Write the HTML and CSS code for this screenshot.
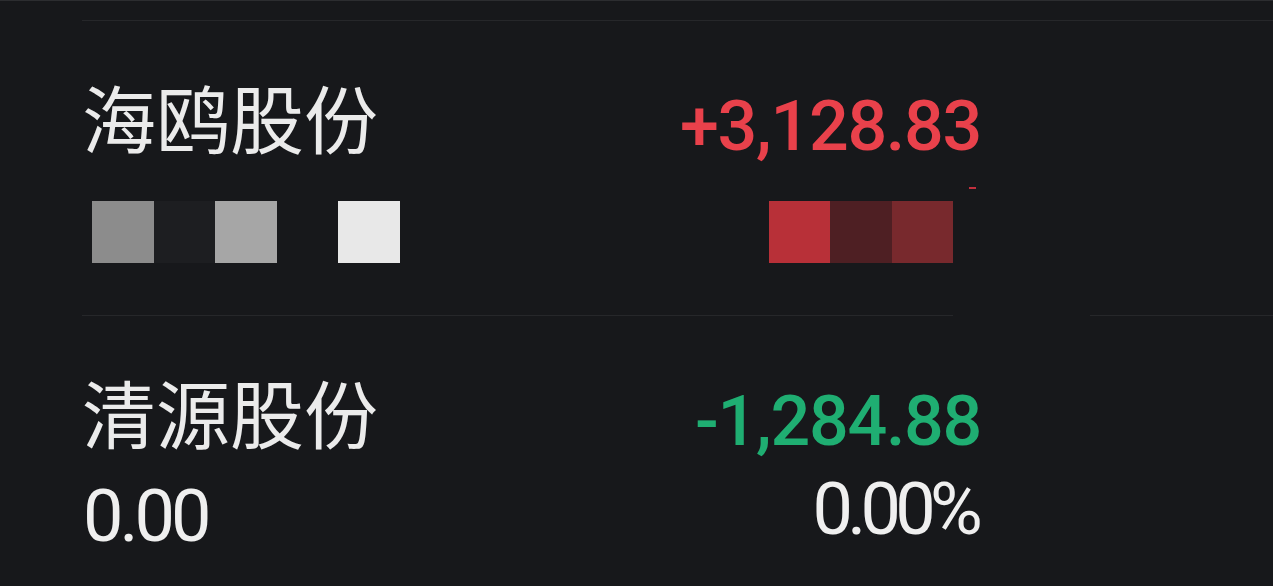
FILE: index.html
```html
<!DOCTYPE html>
<html>
<head>
<meta charset="utf-8">
<title>自选股</title>
<link rel="stylesheet" href="styles.css">
</head>
<body>

<div class="watchlist">
    <div class="rule"></div>

    <div class="stock">
        <div class="stock-left">
            <div class="stock-name">海鸥股份</div>
            <div class="swatches swatches-gray">
                <span class="sw sw-mid"></span><span class="sw sw-dim"></span><span class="sw sw-light"></span><span class="sw"></span><span class="sw sw-white"></span>
            </div>
        </div>
        <div class="stock-right">
            <div class="change up">+3,128.83</div>
            <div class="tick"></div>
            <div class="swatches swatches-red">
                <span class="sw sw-red1"></span><span class="sw sw-red2"></span><span class="sw sw-red3"></span>
            </div>
        </div>
    </div>

    <div class="rule rule-gap"></div>

    <div class="stock">
        <div class="stock-left">
            <div class="stock-name">清源股份</div>
            <div class="price">0.00</div>
        </div>
        <div class="stock-right">
            <div class="change down">-1,284.88</div>
            <div class="pct">0.00%</div>
        </div>
    </div>
</div>

</body>
</html>
```

FILE: styles.css
```css
html, body {margin:0; padding:0; background:#17181b;}
body {height:586px; overflow:hidden; border-top:1px solid #2c2d30; box-sizing:border-box; font-family:Roboto, "Noto Sans CJK SC", sans-serif; color:#ebebeb;}
/* list */
.watchlist {padding-top:19px;}
.rule {height:1px; margin-left:82px; background:#26272a;}
.rule-gap {background:linear-gradient(to right, #26272a 0, #26272a 871px, transparent 871px, transparent 1008px, #26272a 1008px);}
.stock {display:flex; justify-content:space-between; align-items:flex-start; padding:58px 292px 0 82px;}
.stock + .rule {margin-top:52px;}
.stock-left {display:flex; flex-direction:column;}
.stock-right {display:flex; flex-direction:column; align-items:flex-end; margin-top:12px;}
/* name and numbers */
.stock-name {font:400 74px/74px "Noto Sans CJK SC", sans-serif; color:#ebebeb;}
.change {font:500 70px/70px Roboto, sans-serif; letter-spacing:-1.3px;}
.change.up {color:#e9414b;}
.change.down {color:#1fae72;}
.price, .pct {font:400 72px/72px Roboto, sans-serif; letter-spacing:-4px; color:#efefef;}
.price {margin-top:33px; margin-left:1px;}
.pct {margin-top:18px; margin-right:4px; letter-spacing:-5.7px;}
/* masked value blocks */
.swatches {display:flex;}
.swatches .sw {display:block; width:61.5px; height:62px;}
.swatches-gray {margin:48px 0 0 10px;}
.swatches-red {margin-top:12px; margin-right:28px;}
.tick {width:7px; height:2px; margin:26px 5px 0 0; background:#c2303e;}
.sw-mid {background:#8c8c8c;}
.sw-dim {background:#1d1e21;}
.sw-light {background:#a6a6a6;}
.sw-white {background:#e8e8e8;}
.sw-red1 {background:#b83038;}
.sw-red2 {background:#4e1f23;}
.sw-red3 {background:#78292d;}
```
